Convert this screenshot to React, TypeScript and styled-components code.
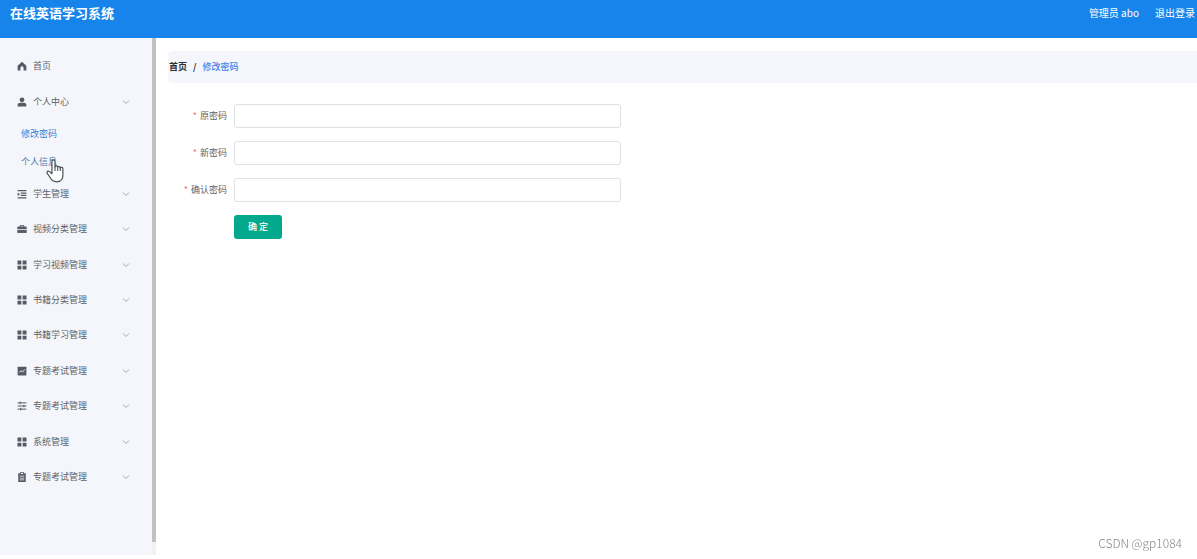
import React from 'react';
import styled, { createGlobalStyle } from 'styled-components';

const GlobalStyle = createGlobalStyle`
  * { box-sizing: border-box; }
  body {
    margin: 0;
    background: #fff;
    color: #606266;
    font-family: "Noto Sans CJK SC", "Noto Sans", sans-serif;
    font-size: 9px;
    line-height: 16px;
  }
  a { color: inherit; text-decoration: none; }
  ul { list-style: none; margin: 0; padding: 0; }
`;

const Page = styled.div`
  min-height: 100vh;
  padding-bottom: 4px;
  display: flex;
  flex-direction: column;
`;

const Header = styled.header`
  height: 38px;
  padding: 4px 2px 0 10px;
  display: flex;
  justify-content: space-between;
  align-items: flex-start;
  background: #1684ea;
  color: #fff;
`;

const Title = styled.h1`
  margin: 0;
  font-size: 13px;
  line-height: 18px;
  font-weight: 700;
`;

const UserArea = styled.div`
  display: flex;
  gap: 16px;
  font-size: 10px;
  line-height: 18px;
  white-space: nowrap;
`;

const Body = styled.div`
  flex: 1;
  display: flex;
`;

const Sidebar = styled.aside`
  flex: 0 0 156px;
  display: flex;
  background: #f4f6fb;
`;

const Nav = styled.nav`
  flex: 1;
  padding-top: 10px;
`;

const Menu = styled.ul<{ $height: number }>`
  display: grid;
  grid-auto-rows: 1fr;
  min-height: ${(p) => p.$height}px;
`;

const MenuButton = styled.button`
  width: 100%;
  height: 100%;
  min-height: 35px;
  padding: 0 22px 0 17px;
  display: flex;
  align-items: center;
  gap: 6px;
  border: 0;
  background: none;
  color: #606266;
  font: inherit;
  text-align: left;
  cursor: pointer;
`;

const MenuText = styled.span`
  flex: 1;
`;

const SubItem = styled.li`
  position: relative;
`;

const SubLink = styled.a<{ $dim?: boolean }>`
  display: block;
  padding-left: 21px;
  line-height: 28px;
  color: ${(p) => (p.$dim ? '#4679ad' : '#2f80d8')};
`;

const Pointer = styled.svg`
  position: absolute;
  left: 45px;
  top: 10px;
  width: 20px;
  height: 26px;
  z-index: 1;
  pointer-events: none;
`;

const Track = styled.div`
  width: 4px;
  padding-bottom: 13px;
  display: flex;
  background: #f1f1f1;
`;

const Thumb = styled.div`
  flex: 1;
  background: #c1c1c1;
`;

const Content = styled.main`
  flex: 1;
  min-width: 0;
  padding: 13px 0 0 12px;
`;

const Breadcrumb = styled.nav`
  height: 32px;
  padding-left: 1px;
  display: flex;
  align-items: center;
  gap: 6px;
  border-radius: 4px 0 0 4px;
  background: #f5f6fb;
  color: #303133;
  font-weight: 700;
`;

const Current = styled.span`
  color: #4080ee;
  font-weight: 500;
`;

const Form = styled.form`
  width: 44%;
  margin-top: 21px;
  display: grid;
  grid-template-columns: 59px 1fr;
  column-gap: 7px;
  row-gap: 13px;
  align-items: center;
`;

const Label = styled.label`
  text-align: right;
  white-space: nowrap;
`;

const Required = styled.span`
  margin-right: 3px;
  color: #f56c6c;
`;

const Input = styled.input`
  width: 100%;
  height: 24px;
  padding: 0 8px;
  border: 1px solid #dfe1e7;
  border-radius: 3px;
  background: #fff;
  font: inherit;
  outline: none;
`;

const Submit = styled.button`
  grid-column: 2;
  justify-self: start;
  width: 48px;
  height: 24px;
  padding: 0;
  border: 0;
  border-radius: 3px;
  background: #04a98d;
  color: #fff;
  font: inherit;
  font-weight: 500;
`;

const Watermark = styled.div`
  position: fixed;
  right: 15px;
  bottom: 8px;
  color: #858585;
  font-size: 12px;
  font-weight: 300;
`;

type IconName = 'home' | 'user' | 'list' | 'case' | 'grid' | 'chart' | 'sliders' | 'clipboard';

const shapes: Record<IconName, React.ReactNode> = {
  home: <path fill="currentColor" d="M8 1 15 7.5V15h-4.500v-4a2.500 2.500 0 0 0-5 0v4H1V7.500Z" />,
  user: (
    <g fill="currentColor">
      <circle cx="8" cy="4.500" r="3.800" />
      <path d="M1 15v-2.500C1 10.500 3 9.300 5 9.300h6c2 0 4 1.200 4 3.200V15Z" />
    </g>
  ),
  list: (
    <path fill="currentColor" d="M1 1.500h14v2.200H1zM6 5.700h9v1.800H6zM6 9.200h9V11H6zM1 13h14v2.200H1zM1 5.500 4.800 8.300 1 11z" />
  ),
  case: (
    <g fill="currentColor">
      <path
        d="M4.500 4V3c0-1 .6-1.600 1.600-1.600h3.800c1 0 1.600.6 1.600 1.600v1h2.300c1 0 1.700.7 1.700 1.700v2.800H.5V5.700C.5 4.700 1.200 4 2.200 4ZM6 4h4V2.900H6Z"
        fillRule="evenodd"
      />
      <path d="M.5 9.700h15v4.600H.5z" />
    </g>
  ),
  grid: <path fill="currentColor" d="M.8.8H7V7H.8zM9 .8h6.200V7H9zM.8 9H7v6.200H.8zM9 9h6.200v6.200H9z" />,
  chart: (
    <g>
      <rect x="1" y="1" width="14" height="14" rx="1" fill="currentColor" />
      <path d="m3.500 10.500 3-3 2.500 2 3.500-4" fill="none" stroke="#f4f6fb" strokeWidth="1.500" />
    </g>
  ),
  sliders: (
    <path
      d="M1 3h14M1 8h14M1 13h14M5 1v4M11 6v4M6 11v4"
      fill="none"
      stroke="currentColor"
      strokeWidth="1.600"
    />
  ),
  clipboard: (
    <path
      fill="currentColor"
      fillRule="evenodd"
      d="M5 0h6v2h3v14H2V2h3Zm1.200 1.200v2h3.600v-2ZM4.500 6v1.300h7V6Zm0 3v1.300h7V9Zm0 3v1.300h7V12Z"
    />
  ),
};

const IconSvg = styled.svg`
  flex: none;
  width: 10px;
  height: 10px;
  color: #545b66;
`;

const ArrowSvg = styled.svg`
  flex: none;
  width: 8px;
  height: 8px;
`;

const Icon = ({ name }: { name: IconName }) => (
  <IconSvg viewBox="0 0 16 16" aria-hidden="true">{shapes[name]}</IconSvg>
);

const Arrow = () => (
  <ArrowSvg viewBox="0 0 8 8" aria-hidden="true">
    <path d="M1 2.500 4 5.500 7 2.500" fill="none" stroke="#909399" strokeWidth="0.800" />
  </ArrowSvg>
);

interface Entry {
  icon: IconName;
  text: string;
  leaf?: boolean;
}

const MenuItem = ({ icon, text, leaf }: Entry) => (
  <li>
    <MenuButton type="button">
      <Icon name={icon} />
      <MenuText>{text}</MenuText>
      {!leaf && <Arrow />}
    </MenuButton>
  </li>
);

const personal: Entry[] = [
  { icon: 'home', text: '首页', leaf: true },
  { icon: 'user', text: '个人中心' },
];

const management: Entry[] = [
  { icon: 'list', text: '学生管理' },
  { icon: 'case', text: '视频分类管理' },
  { icon: 'grid', text: '学习视频管理' },
  { icon: 'grid', text: '书籍分类管理' },
  { icon: 'grid', text: '书籍学习管理' },
  { icon: 'chart', text: '专题考试管理' },
  { icon: 'sliders', text: '专题考试管理' },
  { icon: 'grid', text: '系统管理' },
  { icon: 'clipboard', text: '专题考试管理' },
];

const fields = [
  { id: 'old-password', text: '原密码' },
  { id: 'new-password', text: '新密码' },
  { id: 'confirm-password', text: '确认密码' },
];

export default function App() {
  return (
    <>
      <GlobalStyle />
      <Page>
        <Header>
          <Title>在线英语学习系统</Title>
          <UserArea>
            <span>管理员 abo</span>
            <a href="#logout">退出登录</a>
          </UserArea>
        </Header>
        <Body>
          <Sidebar>
            <Nav>
              <Menu $height={72}>
                {personal.map((e) => <MenuItem key={e.text} {...e} />)}
              </Menu>
              <ul>
                <SubItem><SubLink href="#password">修改密码</SubLink></SubItem>
                <SubItem>
                  <SubLink href="#profile" $dim>个人信息</SubLink>
                  <Pointer viewBox="0 0 18 24" aria-hidden="true">
                    <path
                      d="M6.2 14.5V3.2c0-2 2.8-2 2.8 0v5c.3-1.3 2.4-1.2 2.5.3.4-1 2.3-.8 2.4.6.6-.9 2.4-.5 2.4 1v5.4c0 4-2.3 6.5-5.8 6.5-3 0-4.600-1.400-6-4L1.700 14c-.8-1.500 1.200-2.600 2.300-1.400Z"
                      fill="#fff"
                      stroke="#4a4e55"
                      strokeWidth="1.1"
                      strokeLinejoin="round"
                    />
                    <path d="M9 8v4M11.500 8.500V12M13.900 9.200V12" stroke="#4a4e55" strokeWidth="1" />
                  </Pointer>
                </SubItem>
              </ul>
              <Menu $height={319}>
                {management.map((e, i) => <MenuItem key={i} {...e} />)}
              </Menu>
            </Nav>
            <Track><Thumb /></Track>
          </Sidebar>
          <Content>
            <Breadcrumb aria-label="breadcrumb">
              <a href="#home">首页</a>
              <span>/</span>
              <Current>修改密码</Current>
            </Breadcrumb>
            <Form onSubmit={(e) => e.preventDefault()}>
              {fields.map((f) => (
                <React.Fragment key={f.id}>
                  <Label htmlFor={f.id}><Required>*</Required>{f.text}</Label>
                  <Input id={f.id} type="password" />
                </React.Fragment>
              ))}
              <Submit type="submit">确 定</Submit>
            </Form>
          </Content>
        </Body>
        <Watermark>CSDN @gp1084</Watermark>
      </Page>
    </>
  );
}
